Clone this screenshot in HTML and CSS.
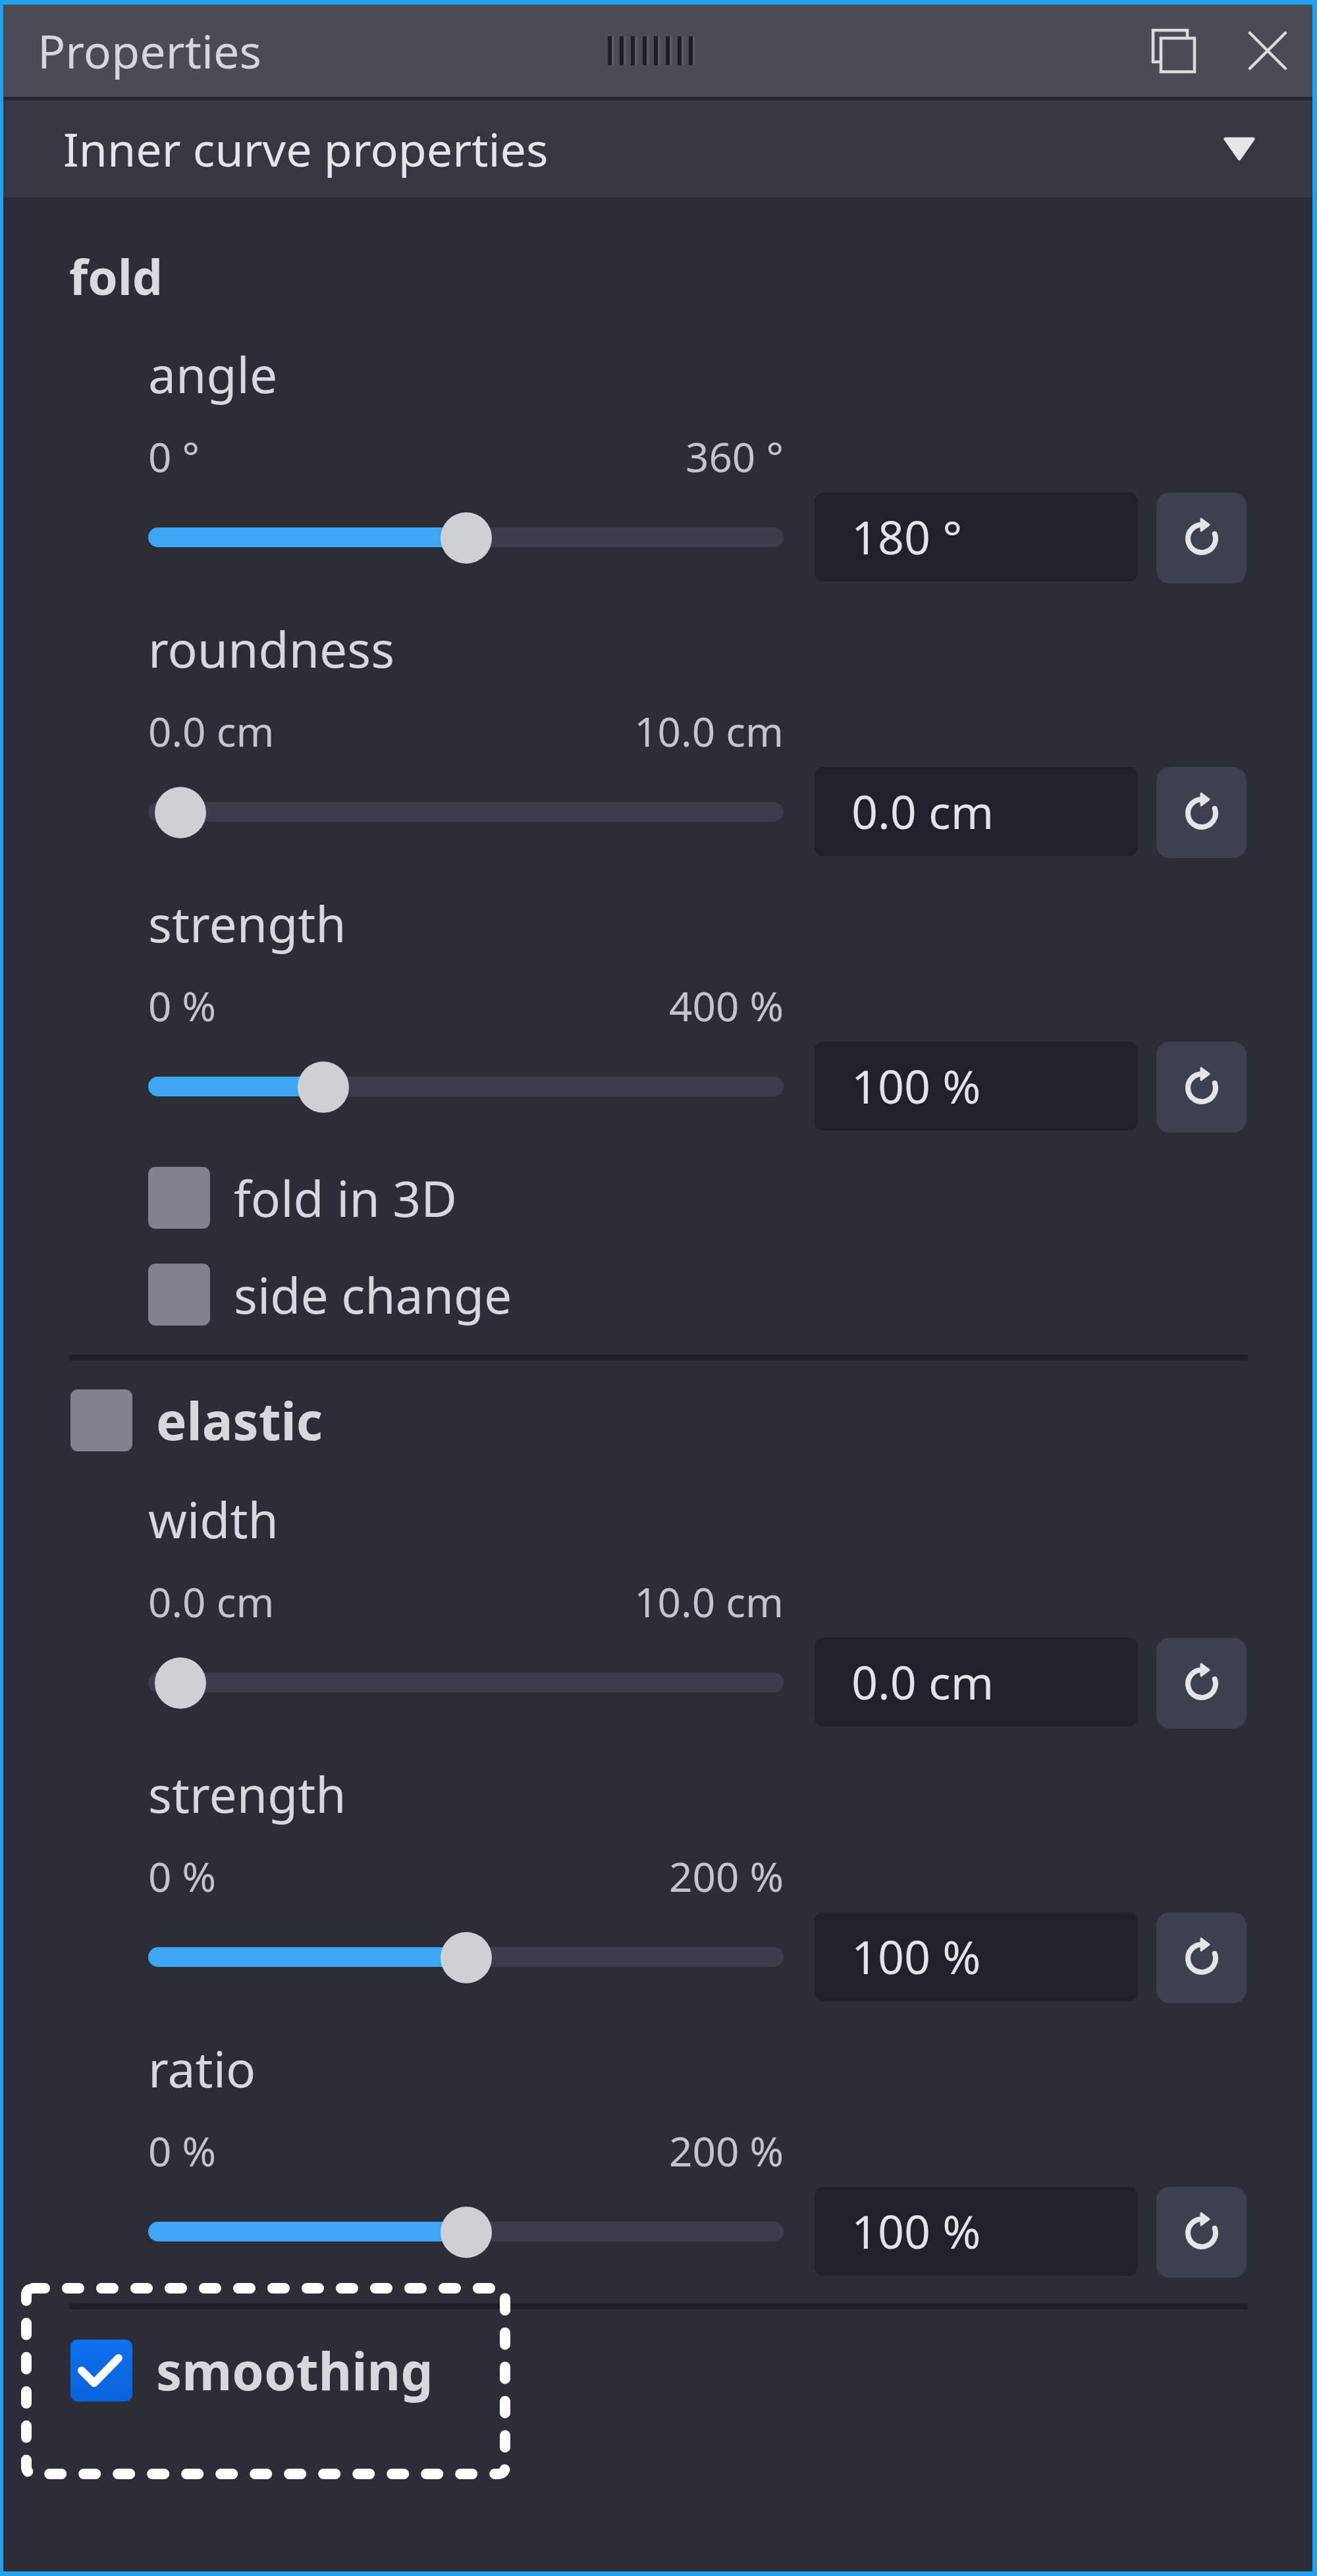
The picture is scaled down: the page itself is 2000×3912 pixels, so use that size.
FILE: index.html
```html
<!DOCTYPE html>
<html lang="en">
<head>
    <meta charset="UTF-8">
    <title>Properties</title>
    <link rel="stylesheet" href="styles.css">
</head>
<body>

<svg width="0" height="0" class="defs">
    <symbol id="reset-icon" viewBox="0 0 64 64">
        <path d="M51.7 25.8 A21 21 0 1 1 32 12" fill="none" stroke="#e4e5e8" stroke-width="8" stroke-linecap="round"/>
        <polygon points="31,3 43,12 31,21" fill="#e4e5e8" stroke="#e4e5e8" stroke-width="3" stroke-linejoin="round"/>
    </symbol>
</svg>

<div class="panel">
    <header class="titlebar">
        <span class="title">Properties</span>
        <span class="grip"></span>
        <div class="win-btns">
            <svg width="70" height="70" viewBox="0 0 70 70">
                <rect x="4" y="4" width="52" height="48" fill="none" stroke="#dcdcdc" stroke-width="4.5"/>
                <rect x="16" y="16" width="51" height="51" fill="#4a4c55" stroke="#dcdcdc" stroke-width="4.5"/>
            </svg>
            <svg width="60" height="60" viewBox="0 0 60 60">
                <path d="M3 3 L57 57 M57 3 L3 57" stroke="#dcdcdc" stroke-width="4.5" stroke-linecap="round"/>
            </svg>
        </div>
    </header>

    <div class="combo">
        <span>Inner curve properties</span>
        <svg width="50" height="38" viewBox="0 0 50 38">
            <polygon points="4,4 46,4 25,34" fill="#e6e6e8" stroke="#e6e6e8" stroke-width="5" stroke-linejoin="round"/>
        </svg>
    </div>

    <main class="props">
        <div class="heading">fold</div>

        <div class="group">
            <div class="label">angle</div>
            <div class="range"><span>0 °</span><span>360 °</span></div>
            <div class="control">
                <div class="slider"><div class="track" style="--v: 0.5"><div class="fill"></div><div class="knob"></div></div></div>
                <div class="value">180 °</div>
                <button class="reset"><svg width="64" height="64"><use href="#reset-icon"/></svg></button>
            </div>
        </div>

        <div class="group">
            <div class="label">roundness</div>
            <div class="range"><span>0.0 cm</span><span>10.0 cm</span></div>
            <div class="control">
                <div class="slider"><div class="track" style="--v: 0"><div class="fill"></div><div class="knob"></div></div></div>
                <div class="value">0.0 cm</div>
                <button class="reset"><svg width="64" height="64"><use href="#reset-icon"/></svg></button>
            </div>
        </div>

        <div class="group">
            <div class="label">strength</div>
            <div class="range"><span>0 %</span><span>400 %</span></div>
            <div class="control">
                <div class="slider"><div class="track" style="--v: 0.25"><div class="fill"></div><div class="knob"></div></div></div>
                <div class="value">100 %</div>
                <button class="reset"><svg width="64" height="64"><use href="#reset-icon"/></svg></button>
            </div>
        </div>

        <div class="check"><span class="box"></span>fold in 3D</div>
        <div class="check"><span class="box"></span>side change</div>

        <div class="sep"></div>

        <div class="check head"><span class="box"></span>elastic</div>

        <div class="group">
            <div class="label">width</div>
            <div class="range"><span>0.0 cm</span><span>10.0 cm</span></div>
            <div class="control">
                <div class="slider"><div class="track" style="--v: 0"><div class="fill"></div><div class="knob"></div></div></div>
                <div class="value">0.0 cm</div>
                <button class="reset"><svg width="64" height="64"><use href="#reset-icon"/></svg></button>
            </div>
        </div>

        <div class="group">
            <div class="label">strength</div>
            <div class="range"><span>0 %</span><span>200 %</span></div>
            <div class="control">
                <div class="slider"><div class="track" style="--v: 0.5"><div class="fill"></div><div class="knob"></div></div></div>
                <div class="value">100 %</div>
                <button class="reset"><svg width="64" height="64"><use href="#reset-icon"/></svg></button>
            </div>
        </div>

        <div class="group">
            <div class="label">ratio</div>
            <div class="range"><span>0 %</span><span>200 %</span></div>
            <div class="control">
                <div class="slider"><div class="track" style="--v: 0.5"><div class="fill"></div><div class="knob"></div></div></div>
                <div class="value">100 %</div>
                <button class="reset"><svg width="64" height="64"><use href="#reset-icon"/></svg></button>
            </div>
        </div>

        <div class="focus-wrap">
            <div class="sep"></div>
            <div class="check head">
                <span class="box checked">
                    <svg width="94" height="94" viewBox="0 0 94 94">
                        <path d="M17 47 L36 66 L73 28" fill="none" stroke="#fff" stroke-width="12" stroke-linecap="round" stroke-linejoin="round"/>
                    </svg>
                </span>smoothing
            </div>
            <!-- keyboard focus frame -->
            <svg class="focus-ring" width="743" height="298" viewBox="0 0 743 298">
                <rect x="8" y="8" width="727" height="282" rx="10" fill="none" stroke="#fff" stroke-width="16" stroke-linecap="round" stroke-dasharray="18 34"/>
            </svg>
        </div>
    </main>
</div>

</body>
</html>
```

FILE: styles.css
```css
body {
    margin: 0;
    background: #2b2d37;
    font-family: "Noto Sans", "Open Sans", sans-serif;
}

.defs {
    position: absolute;
}

.panel {
    height: 100vh;
    box-sizing: border-box;
    border: 7px solid #1fa3f1;
    border-left-width: 5px;
    background: #2b2d37;
    display: flex;
    flex-direction: column;
}

.titlebar {
    height: 140px;
    flex: none;
    background: #4a4c55;
    border-bottom: 5px solid #25272f;
    display: grid;
    grid-template-columns: 1fr auto 1fr;
    align-items: center;
    padding: 0 38px 0 52px;
}

.title {
    font-size: 70px;
    line-height: 1;
    color: #d3d6dc;
}

.grip {
    width: 132px;
    height: 44px;
    margin-right: 34px;
    background: repeating-linear-gradient(90deg, #1d1f27 0 6px, #575963 6px 10px, transparent 10px 17.6px);
}

.win-btns {
    justify-self: end;
    display: flex;
    align-items: center;
    gap: 78px;
}

.combo {
    height: 148px;
    flex: none;
    background: #353741;
    display: flex;
    align-items: center;
    justify-content: space-between;
    padding: 0 86px 0 91px;
    font-size: 70px;
    color: #e4e5e8;
}

.props {
    padding: 70px 98px 0 100px;
}

.heading {
    font-size: 73px;
    font-weight: 700;
    line-height: 100px;
    color: #d9dbe0;
}

.group {
    margin-top: 52px;
    padding-left: 120px;
}

.heading + .group {
    margin-top: 48px;
}

.check.head + .group {
    margin-top: 53px;
}

.label {
    font-size: 75px;
    line-height: 100px;
    color: #d6d8dd;
}

.range {
    width: 965px;
    display: flex;
    justify-content: space-between;
    margin-top: 35px;
    font-size: 62px;
    line-height: 80px;
    color: #c3c5cb;
}

.control {
    display: flex;
    align-items: flex-start;
    height: 135px;
    margin-top: 15px;
}

.slider {
    width: 965px;
    height: 135px;
    display: flex;
    align-items: center;
}

.track {
    position: relative;
    width: 100%;
    height: 30px;
    border-radius: 15px;
    background: #3b3e4a;
}

.fill {
    height: 100%;
    width: calc(var(--v) * (100% - 98px) + min(49px, var(--v) * 100000px));
    border-radius: 15px;
    background: #3da6f5;
}

.knob {
    position: absolute;
    top: -23px;
    left: calc(10px + var(--v) * (100% - 98px));
    width: 78px;
    height: 78px;
    border-radius: 50%;
    background: #cfd0d5;
}

.value {
    margin-left: 47px;
    width: 491px;
    height: 135px;
    box-sizing: border-box;
    padding-left: 56px;
    background: #1f212b;
    border-radius: 14px;
    font-size: 70px;
    line-height: 135px;
    color: #e1e3e7;
}

.reset {
    flex: none;
    margin-left: 28px;
    width: 137px;
    height: 138px;
    border: 0;
    padding: 0;
    background: #3d404e;
    border-radius: 20px;
    display: flex;
    align-items: center;
    justify-content: center;
}

.check {
    display: flex;
    align-items: center;
    height: 94px;
    padding-left: 120px;
    margin-top: 53px;
    font-size: 75px;
    color: #d6d8dd;
}

.group + .check {
    margin-top: 55px;
}

.check.head {
    padding-left: 2px;
    font-size: 78px;
    font-weight: 700;
}

.box {
    flex: none;
    width: 94px;
    height: 94px;
    margin-right: 36px;
    border-radius: 11px;
    background: #80838e;
}

.box.checked {
    background: linear-gradient(#0e70f0, #0a62d9);
}

.box svg {
    display: block;
}

.sep {
    height: 9px;
    margin-top: 44px;
    background: #1e1f28;
}

.sep + .check {
    margin-top: 44px;
}

.focus-wrap {
    position: relative;
    margin-top: 42px;
}

.focus-wrap .sep {
    margin-top: 0;
}

.focus-wrap .check {
    margin-top: 46px;
}

.focus-ring {
    position: absolute;
    left: -73px;
    top: -31px;
}
```
